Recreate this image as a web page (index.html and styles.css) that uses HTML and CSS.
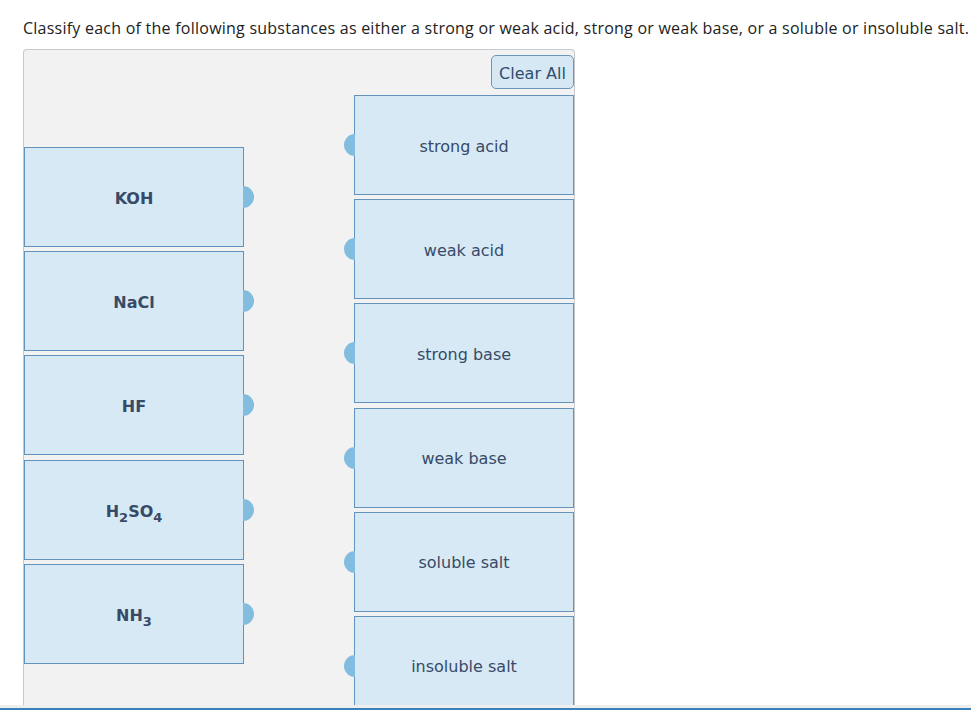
FILE: index.html
```html
<!DOCTYPE html>
<html lang="en">
<head>
<meta charset="utf-8">
<title>Classify substances</title>
<link rel="stylesheet" href="styles.css">
</head>
<body>
<p class="prompt">Classify each of the following substances as either a strong or weak acid, strong or weak base, or a soluble or insoluble salt.</p>
<div class="panel">
  <div class="toolbar"><button class="clear-btn" type="button">Clear All</button></div>
  <div class="columns">
    <div class="col col-left">
      <div class="item item-left"><span class="label">KOH</span></div>
      <div class="item item-left"><span class="label">NaCl</span></div>
      <div class="item item-left"><span class="label">HF</span></div>
      <div class="item item-left"><span class="label">H<sub>2</sub>SO<sub>4</sub></span></div>
      <div class="item item-left"><span class="label">NH<sub>3</sub></span></div>
    </div>
    <div class="col col-right">
      <div class="item item-right"><span class="label">strong acid</span></div>
      <div class="item item-right"><span class="label">weak acid</span></div>
      <div class="item item-right"><span class="label">strong base</span></div>
      <div class="item item-right"><span class="label">weak base</span></div>
      <div class="item item-right"><span class="label">soluble salt</span></div>
      <div class="item item-right"><span class="label">insoluble salt</span></div>
    </div>
  </div>
</div>
<div class="footer-bar"></div>
</body>
</html>
```
FILE: styles.css
```css
html, body {
  margin: 0;
  padding: 0;
  background: #ffffff;
}
body {
  padding-left: 23px;
  font-family: "DejaVu Sans", Verdana, sans-serif;
}
.prompt {
  margin: 17px 0 10px;
  font-family: "Open Sans", "Liberation Sans", sans-serif;
  font-size: 16px;
  line-height: 22px;
  letter-spacing: 0.24px;
  color: #222222;
  white-space: nowrap;
}
.panel {
  box-sizing: border-box;
  width: 552px;
  height: 760px;
  background: #f2f2f2;
  border: 1px solid #c5c9cd;
  border-bottom: none;
  border-radius: 4px 4px 0 0;
}
.toolbar {
  display: flex;
  justify-content: flex-end;
  padding: 5px 0 0 0;
}
.clear-btn {
  box-sizing: border-box;
  height: 34px;
  width: 83px;
  padding: 2px 0 0;
  font-family: "DejaVu Sans", Verdana, sans-serif;
  font-size: 16px;
  color: #2f4c70;
  background: #d6e8f4;
  border: 1px solid #6b95b9;
  border-radius: 5px;
}
.columns {
  display: flex;
  justify-content: space-between;
  margin-top: 6px;
}
.col {
  width: 220px;
  display: flex;
  flex-direction: column;
  gap: 4.2px;
}
.col-left {
  margin-top: 52px;
}
.item {
  position: relative;
  box-sizing: border-box;
  height: 100px;
  padding-top: 2px;
  display: flex;
  align-items: center;
  justify-content: center;
  background: #d6e9f5;
  border: 1px solid #6393ba;
  font-size: 16px;
  color: #384a66;
}
.item-left {
  font-weight: bold;
  padding-top: 3px;
}
.label sub {
  font-size: 13px;
  vertical-align: -5px;
  line-height: 0;
}
.item-left::after {
  content: "";
  position: absolute;
  left: 100%;
  top: 50%;
  margin-top: -11px;
  width: 11px;
  height: 22px;
  background: #82bcde;
  border-radius: 0 11px 11px 0;
}
.item-right::before {
  content: "";
  position: absolute;
  right: 100%;
  top: 50%;
  margin-top: -11px;
  width: 11px;
  height: 22px;
  background: #82bcde;
  border-radius: 11px 0 0 11px;
}
.footer-bar {
  position: fixed;
  left: 0;
  right: 0;
  bottom: 0;
  height: 2px;
  background: #3a80bd;
  border-top: 3px solid #efefef;
}
```
